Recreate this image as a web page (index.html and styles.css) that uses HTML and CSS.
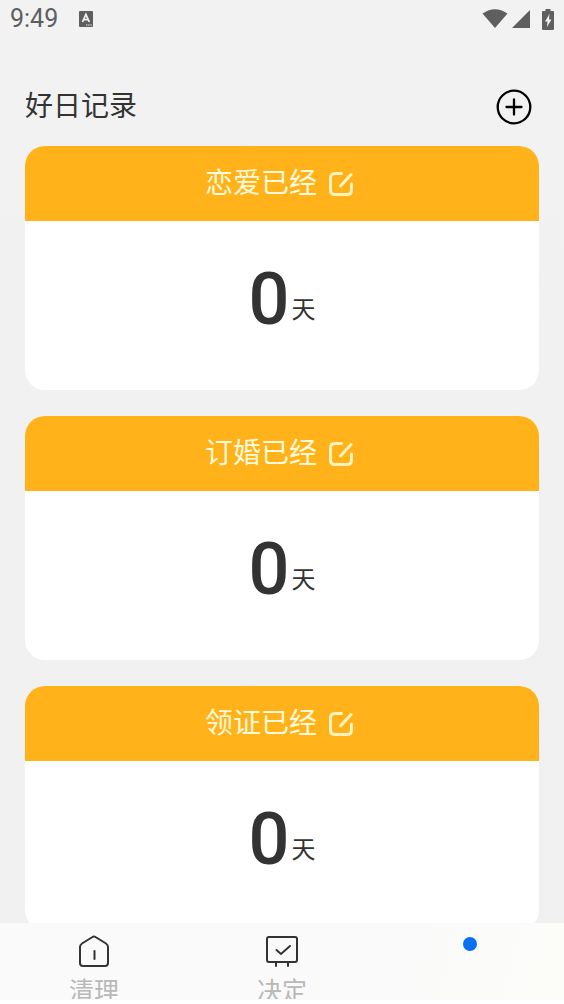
FILE: index.html
```html
<!DOCTYPE html>
<html lang="zh-CN">
<head>
<meta charset="utf-8">
<meta name="viewport" content="width=device-width, initial-scale=1">
<title>好日记录</title>
<link rel="stylesheet" href="styles.css">
</head>
<body>
<div class="app">
  <div class="status">
    <span class="clock">9:49</span>
    <svg class="status-app" width="16" height="18" viewBox="0 0 16 18"><rect x="1" y="1" width="14" height="16" rx="1" fill="#5f5f5f"/><path d="M4.5 12 7.900 4.500 11.300 12M5.800 9.700h4.200" fill="none" stroke="#f2f2f2" stroke-width="1.800"/><path d="M8 15h1.400m.8 0h1.400m.8 0h1.400" stroke="#f2f2f2"/></svg>
    <div class="status-icons">
      <svg width="26" height="20" viewBox="0 0 26 20"><path d="M.5 4.500Q13-4 25.500 4.500L13 19z" fill="#5f5f5f"/></svg>
      <svg width="18" height="18" viewBox="0 0 18 18"><path d="M18 0v18H0z" fill="#5f5f5f"/></svg>
      <svg class="battery" width="12" height="21" viewBox="0 0 12 21"><path d="M3.500 0h5v2H11q1 0 1 1v17q0 1-1 1H1q-1 0-1-1V3q0-1 1-1h2.500z" fill="#5f5f5f"/><path d="M7.500 5 3 12.500h2.500L5 18l4.500-7.500H7z" fill="#f2f2f2"/></svg>
    </div>
  </div>
  <header class="header">
    <h1 class="title">好日记录</h1>
    <button class="icon-button" type="button" aria-label="添加"><svg width="36" height="36" viewBox="0 0 36 36" fill="none" stroke="#000" stroke-width="2.300" stroke-linecap="round"><circle cx="18" cy="18" r="16.300"/><path d="M18 10.500v15M10.500 18h15"/></svg></button>
  </header>
  <main class="cards">
    <section class="card">
      <div class="card-head"><h2 class="card-title">恋爱已经</h2><button class="icon-button" type="button" aria-label="编辑恋爱"><svg width="24" height="24" viewBox="0 0 24 24" class="edit"><path d="M12.500 1.500H6Q1.500 1.500 1.500 6v12q0 4.500 4.500 4.500h12q4.500 0 4.500-4.500v-6M11.500 14 22 2.500"/></svg></button></div>
      <p class="count"><strong class="number">0</strong><span class="unit">天</span></p>
    </section>
    <section class="card">
      <div class="card-head"><h2 class="card-title">订婚已经</h2><button class="icon-button" type="button" aria-label="编辑订婚"><svg width="24" height="24" viewBox="0 0 24 24" class="edit"><path d="M12.500 1.500H6Q1.500 1.500 1.500 6v12q0 4.500 4.500 4.500h12q4.500 0 4.500-4.500v-6M11.500 14 22 2.500"/></svg></button></div>
      <p class="count"><strong class="number">0</strong><span class="unit">天</span></p>
    </section>
    <section class="card">
      <div class="card-head"><h2 class="card-title">领证已经</h2><button class="icon-button" type="button" aria-label="编辑领证"><svg width="24" height="24" viewBox="0 0 24 24" class="edit"><path d="M12.500 1.500H6Q1.500 1.500 1.500 6v12q0 4.500 4.500 4.500h12q4.500 0 4.500-4.500v-6M11.500 14 22 2.500"/></svg></button></div>
      <p class="count"><strong class="number">0</strong><span class="unit">天</span></p>
    </section>
  </main>
  <nav class="tabs">
    <a class="tab" href="#clean"><svg width="32" height="34" viewBox="0 0 32 34" class="tab-icon"><path d="M4 9.500 14.500 3q1.500-1 3 0L28 9.500q2 1.300 2 3.500v16q0 3-3 3H5q-3 0-3-3V13q0-2.200 2-3.500zM16.500 17v8"/></svg><span class="tab-label">清理</span></a>
    <a class="tab" href="#decide"><svg width="34" height="34" viewBox="0 0 34 34" class="tab-icon"><rect x="2" y="3" width="30" height="25" rx="2"/><path d="m11.500 16 4.500 4 9-8M11 28.500V32m12-3.500V32"/></svg><span class="tab-label">决定</span></a>
    <a class="tab" href="#days" aria-label="好日" aria-current="page"><span class="dot"></span></a>
  </nav>
</div>
</body>
</html>
```
FILE: styles.css
```css
* { box-sizing: border-box; }

body {
  margin: 0;
  background: #fff;
  color: #333;
  font-family: Roboto, "Noto Sans CJK SC", sans-serif;
}

h1, h2, p { margin: 0; font-weight: 400; }

svg { display: block; }

.app {
  display: flex;
  flex-direction: column;
  height: 100vh;
  padding-bottom: 4px;
  background: linear-gradient(#f2f2f2, #f0f0f0) no-repeat;
  background-clip: content-box;
}

.status {
  display: flex;
  flex: none;
  align-items: center;
  height: 38px;
  padding: 0 10px;
}

.clock {
  color: #5f5f5f;
  font-size: 25px;
  line-height: 38px;
}

.status-app { margin-left: 20px; }

.status-icons {
  display: flex;
  align-items: center;
  gap: 4px;
  margin-left: auto;
}

.battery { margin-left: 8px; }

.header {
  display: flex;
  flex: none;
  align-items: center;
  justify-content: space-between;
  padding: 50px 32px 20px 25px;
}

.title {
  font-size: 28px;
  line-height: 38px;
}

.icon-button {
  padding: 0;
  border: 0;
  background: none;
}

.cards {
  display: flex;
  flex: 1;
  flex-direction: column;
  gap: 26px;
  min-height: 0;
  padding: 0 25px;
  overflow: hidden;
}

.card {
  flex: none;
  overflow: hidden;
  border-radius: 20px;
  background: #fff;
}

.card-head {
  display: flex;
  align-items: center;
  justify-content: center;
  gap: 12px;
  height: 75px;
  padding-right: 6px;
  background: #ffb21a;
}

.card-title {
  color: #fff9dc;
  font-size: 28px;
  line-height: 36px;
}

.edit {
  fill: none;
  stroke: #fff4bd;
  stroke-width: 3;
  stroke-linecap: round;
}

.count {
  display: flex;
  align-items: flex-end;
  justify-content: center;
  gap: 2px;
  height: 169px;
  padding-bottom: 48px;
}

.number {
  font-size: 72px;
  font-weight: 500;
  line-height: 84px;
}

.unit {
  padding-bottom: 14px;
  font-size: 24px;
  line-height: 36px;
}

.tabs {
  display: flex;
  flex: none;
  height: 77px;
  padding-bottom: 1px;
  background: linear-gradient(100deg, #fafafa 70%, #fcfcf9);
}

.tab {
  display: flex;
  flex: 1;
  flex-direction: column;
  align-items: center;
  padding-top: 11px;
  overflow: hidden;
  text-decoration: none;
}

.tab-icon {
  flex: none;
  fill: none;
  stroke: #333;
  stroke-width: 2;
  stroke-linecap: round;
}

.tab-label {
  margin-top: 6px;
  color: #b8b8b8;
  font-size: 25px;
  line-height: 36px;
}

.dot {
  width: 14px;
  height: 14px;
  margin-top: 3px;
  border-radius: 50%;
  background: #0b6ff2;
}
```
